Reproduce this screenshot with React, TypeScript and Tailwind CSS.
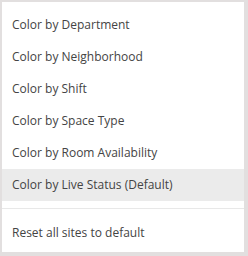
const options = [
  'Color by Department',
  'Color by Neighborhood',
  'Color by Shift',
  'Color by Space Type',
  'Color by Room Availability',
  'Color by Live Status (Default)',
]

const selected = 'Color by Live Status (Default)'

export default function App() {
  return (
    <div className="w-[248px] h-[256px] bg-[#e2dfdf] pl-[2px] pt-[2px] pr-[4px] pb-[4px] font-['Open_Sans',sans-serif]">
      <div className="h-full bg-white flex flex-col pt-[7px]">
        {options.map((label) => (
          <div
            key={label}
            className={`h-[32px] flex items-center px-[10px] text-[12px] text-[#444] ${
              label === selected ? 'bg-[#ebebeb]' : ''
            }`}
          >
            {label}
          </div>
        ))}
        <div className="mt-[7px] h-px bg-[#e8e8e8]" />
        <div className="mt-[8px] h-[32px] flex items-center px-[10px] text-[12px] text-[#444]">
          Reset all sites to default
        </div>
      </div>
    </div>
  )
}
